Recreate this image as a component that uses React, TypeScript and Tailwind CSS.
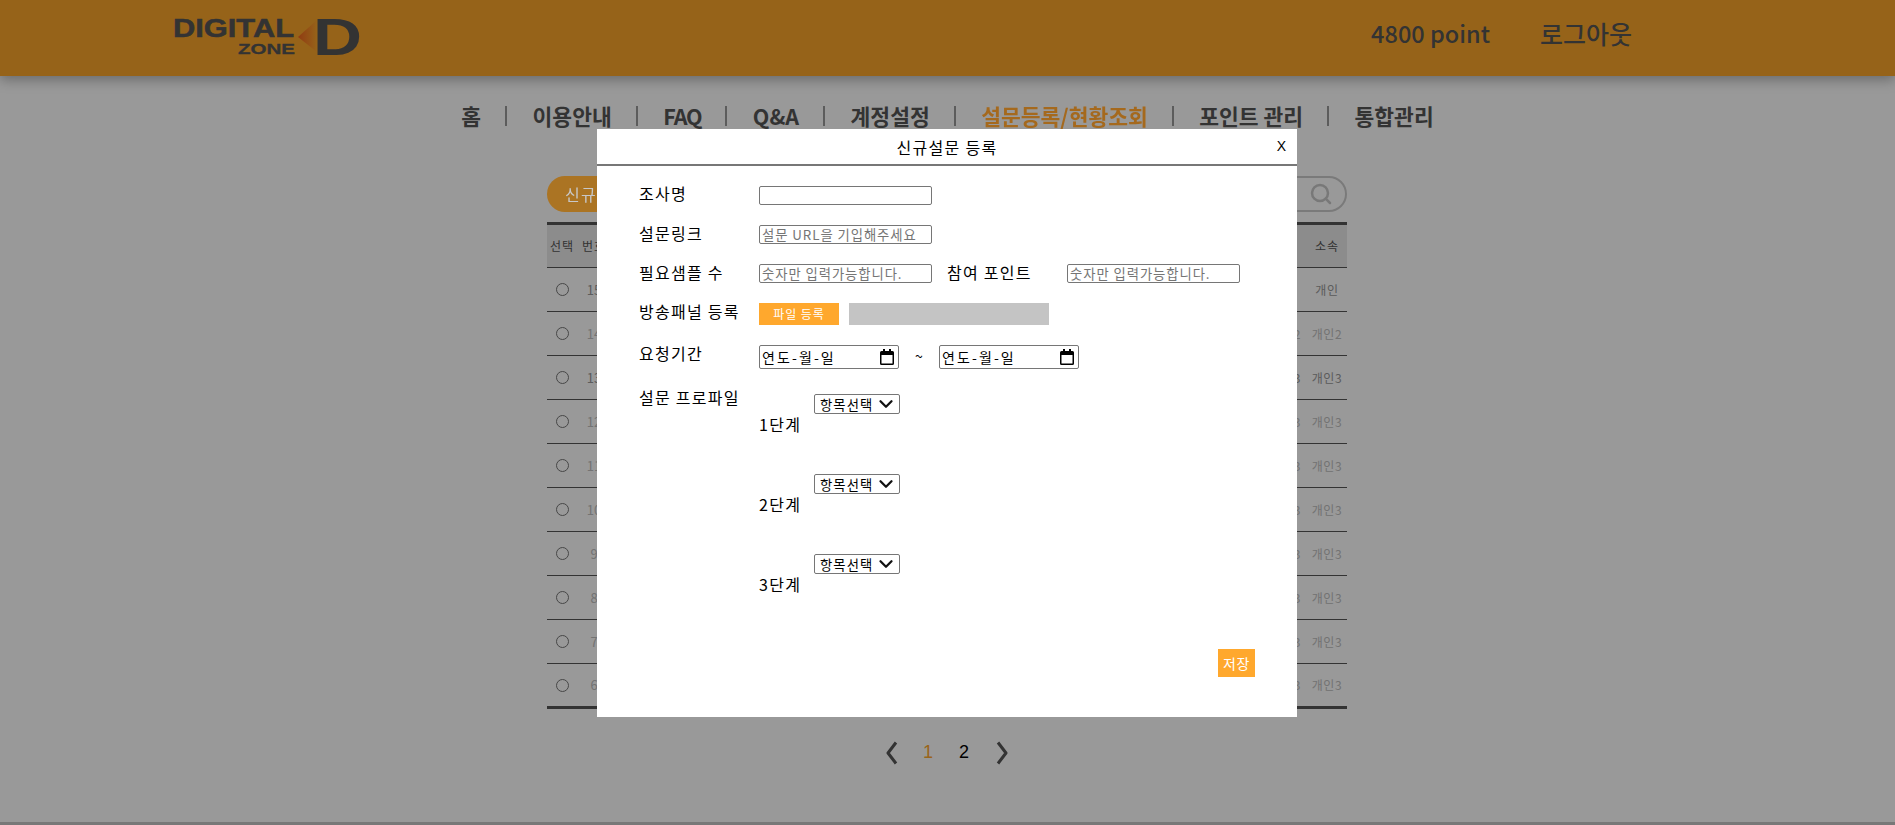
import { Search, ChevronDown } from "lucide-react";

const FONT = "font-['Noto_Sans_CJK_KR','Noto_Sans',sans-serif]";

const NAV = ["홈", "이용안내", "FAQ", "Q&A", "계정설정", "설문등록/현황조회", "포인트 관리", "통합관리"];

const ROWS = [
  { no: 15, count: "", group: "개인", dark: true },
  { no: 14, count: "2", group: "개인2", dark: false },
  { no: 13, count: "3", group: "개인3", dark: true },
  { no: 12, count: "3", group: "개인3", dark: false },
  { no: 11, count: "3", group: "개인3", dark: false },
  { no: 10, count: "3", group: "개인3", dark: false },
  { no: 9, count: "3", group: "개인3", dark: false },
  { no: 8, count: "3", group: "개인3", dark: false },
  { no: 7, count: "3", group: "개인3", dark: false },
  { no: 6, count: "3", group: "개인3", dark: false },
];

function Logo() {
  return (
    <svg width="200" height="64" viewBox="0 -13 200 64">
      <defs>
        <linearGradient id="tri" x1="0" x2="1" y1="0" y2="0">
          <stop offset="0" stopColor="#f0641e" />
          <stop offset="1" stopColor="#fba52b" />
        </linearGradient>
      </defs>
      <text x="-1" y="20" fontFamily="Liberation Sans" fontWeight="700" fontSize="25" textLength="121" lengthAdjust="spacingAndGlyphs" fill="#555" stroke="#555" strokeWidth="0.5">
        DIGITAL
      </text>
      <text x="64" y="37" fontFamily="Liberation Sans" fontWeight="700" fontSize="15.5" textLength="57" lengthAdjust="spacingAndGlyphs" fill="#555" stroke="#555" strokeWidth="0.3">
        ZONE
      </text>
      <polygon points="124,20 143,3 143,35" fill="url(#tri)" />
      <text x="139" y="38" fontFamily="Liberation Sans" fontWeight="700" fontSize="52" textLength="49" lengthAdjust="spacingAndGlyphs" fill="#555">
        D
      </text>
    </svg>
  );
}

function Field({ label, children, className, labelClass }: { label: string; children?: React.ReactNode; className?: string; labelClass?: string }) {
  return (
    <div className={`flex items-center ${className ?? ""}`}>
      <div className={`w-[120px] shrink-0 text-[16px] leading-[20px] tracking-[0.08em] text-black ${labelClass ?? "-translate-y-[2px]"}`}>{label}</div>
      {children}
    </div>
  );
}

function DateBox() {
  return (
    <div className="flex h-[24px] w-[140px] items-center justify-between rounded-[2px] border border-[#767676] pl-[2px] pr-[4px] text-[14px] tracking-[0.15em] text-black">
      <span>연도-월-일</span>
      <svg width="14" height="16" viewBox="0 0 14 16">
        <path d="M3 0h2v2h4V0h2v2h1.5A1.5 1.5 0 0 1 14 3.5v11a1.5 1.5 0 0 1-1.5 1.5h-11A1.5 1.5 0 0 1 0 14.500v-11A1.500 1.500 0 0 1 1.500 2H3zM1.500 6v8.500h11V6z" fill="#000" />
      </svg>
    </div>
  );
}

function StepRow({ label }: { label: string }) {
  return (
    <div className="flex h-[80px]">
      <span className="mt-[20px] w-[55px] text-[16px] leading-[20px] tracking-[0.08em] text-black">{label}</span>
      <div className="relative h-[20px] w-[86px]">
        <select className="block h-[20px] w-[86px] appearance-none rounded-[2px] border border-[#767676] bg-white pl-[5px] text-[13.33px] tracking-[0.08em] text-black">
          <option>항목선택</option>
        </select>
        <ChevronDown className="pointer-events-none absolute right-[3px] top-[-1px]" size={22} strokeWidth={2.5} color="#111" />
      </div>
    </div>
  );
}

function Modal() {
  const input = "h-[19px] w-[173px] rounded-[2px] border border-[#767676] bg-white px-[2px] text-[13.33px] tracking-[0.07em] outline-none placeholder:text-[#757575]";
  return (
    <div className="fixed inset-0 z-30 flex justify-center pr-[1px] pt-[129px]">
      <div className="h-[588px] w-[700px] bg-white">
        <div className="relative flex h-[37px] items-center justify-center border-b-2 border-[#777]">
          <span className="text-[16px] tracking-[0.08em] text-black">신규설문 등록</span>
          <span className="absolute right-[11px] top-[7px] text-[14px] text-black font-['Liberation_Sans']">X</span>
        </div>
        <div className="pl-[42px] pr-[42px]">
          <Field label="조사명" className="mt-[20px] h-[19px]" labelClass="-translate-y-[3px]">
            <input className={input} />
          </Field>
          <Field label="설문링크" className="mt-[20px] h-[19px]">
            <input className={input} placeholder="설문 URL을 기입해주세요" />
          </Field>
          <Field label="필요샘플 수" className="mt-[20px] h-[19px]">
            <input className={input} placeholder="숫자만 입력가능합니다." />
            <div className="ml-[15px] w-[120px] -translate-y-[2px] text-[16px] leading-[20px] tracking-[0.08em] text-black">참여 포인트</div>
            <input className={input} placeholder="숫자만 입력가능합니다." />
          </Field>
          <Field label="방송패널 등록" className="mt-[20px] h-[22px]" labelClass="-translate-y-[3px]">
            <button className="h-[22px] w-[80px] bg-[#ffa82d] text-[12px] tracking-[0.08em] text-white">파일 등록</button>
            <div className="ml-[10px] h-[22px] w-[200px] bg-[#c4c4c4]" />
          </Field>
          <Field label="요청기간" className="mt-[20px] h-[24px]" labelClass="-translate-y-[4px]">
            <DateBox />
            <span className="w-[40px] -translate-y-[1px] text-center text-[14px] text-black">~</span>
            <DateBox />
          </Field>
          <div className="mt-[25px] flex">
            <div className="w-[120px] -translate-y-[7px] text-[16px] leading-[20px] tracking-[0.08em] text-black">설문 프로파일</div>
            <div>
              <StepRow label="1단계" />
              <StepRow label="2단계" />
              <StepRow label="3단계" />
            </div>
          </div>
          <div className="mt-[15px] flex justify-end">
            <button className="h-[28px] w-[37px] bg-[#ffa82d] text-[14px] tracking-[0.05em] text-white">저장</button>
          </div>
        </div>
      </div>
    </div>
  );
}

export default function App() {
  return (
    <div className={`flex h-screen flex-col overflow-hidden bg-white ${FONT}`}>
      <header className="flex h-[76px] shrink-0 items-center justify-between bg-[#fba52b] pl-[174px] pr-[263px] shadow-[0_4px_12px_rgba(0,0,0,0.3)]">
        <div className="mt-[-4px]">
          <Logo />
        </div>
        <div className="mb-[9px] flex items-center gap-[50px] text-[#555]">
          <span className="text-[23.5px] font-medium">4800 point</span>
          <span className="text-[25px] font-medium">로그아웃</span>
        </div>
      </header>

      <nav className="flex h-[80px] shrink-0 items-center justify-center">
        {NAV.map((item, i) => (
          <div key={item} className="flex items-center">
            {i > 0 && <span className="ml-[24px] mr-[25.5px] h-[20px] w-[2px] bg-[#999]" />}
            <span
              className={`text-[21.5px] font-bold ${item === "FAQ" ? "tracking-[-1.2px]" : ""} ${item.startsWith("설문") ? "relative z-20 text-[#a5691d]" : "text-[#555]"}`}
            >
              {item}
            </span>
          </div>
        ))}
      </nav>

      <main className="ml-[547px] w-[800px] flex-1">
        <div className="mt-[20px] flex h-[36px] items-center justify-between">
          <button className="relative z-20 h-[36px] w-[120px] rounded-full bg-[#ab7423] pl-[18px] text-left text-[16px] tracking-[0.08em] text-[#c8c8c8]">신규설문 등록</button>
          <div className="flex h-[36px] w-[300px] items-center justify-end rounded-full border-2 border-[#ccc] pr-[12px]">
            <Search size={24} color="#c8c8c8" strokeWidth={2.5} />
          </div>
        </div>

        <div className="mt-[10px] border-t-[3px] border-b-[3px] border-[#555]">
          <div className="flex h-[43px] items-center border-b border-[#555] bg-[#eaeaea] text-[12px] tracking-[0.08em] text-[#555]">
            <span className="w-[30px] text-center">선택</span>
            <span className="w-[34px] text-center">번호</span>
            <span className="flex-1" />
            <span className="w-[40px] text-center">소속</span>
          </div>
          {ROWS.map((r, i) => (
            <div
              key={r.no}
              className={`flex items-center text-[12px] ${i < ROWS.length - 1 ? "h-[44px] border-b border-[#555]" : "h-[42px]"} ${r.dark ? "text-[#999]" : "text-[#c0c0c0]"}`}
            >
              <span className="flex w-[30px] justify-center">
                <span className="h-[13px] w-[13px] rounded-full border border-[#767676]" />
              </span>
              <span className="w-[34px] text-center text-[13px]">{r.no}</span>
              <span className="flex-1" />
              <span className="w-[20px] text-center">{r.count}</span>
              <span className="w-[40px] text-center tracking-[0.05em]">{r.group}</span>
            </div>
          ))}
        </div>

        <div className="mt-[30px] flex items-center justify-center text-[18px] font-['Liberation_Sans']">
          <svg width="14" height="24" viewBox="0 0 14 24" fill="none">
            <polyline points="11,1.500 3,12 11,22.500" stroke="#555" strokeWidth="3" strokeLinejoin="round" />
          </svg>
          <span className="ml-[24px] text-[#ffa82d]">1</span>
          <span className="ml-[26px] text-black">2</span>
          <svg className="ml-[26px]" width="14" height="24" viewBox="0 0 14 24" fill="none">
            <polyline points="3,1.500 11,12 3,22.500" stroke="#555" strokeWidth="3" strokeLinejoin="round" />
          </svg>
        </div>
      </main>

      <footer className="h-[3px] shrink-0 bg-[#c8c8c8]" />
      <div className="fixed inset-0 z-10 bg-black/40" />
      <Modal />
    </div>
  );
}
